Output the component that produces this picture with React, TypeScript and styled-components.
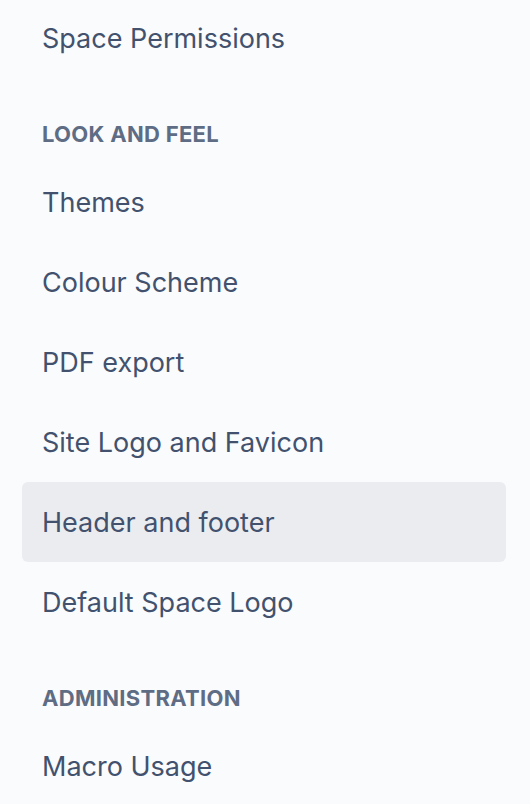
import React from 'react';
import styled, { createGlobalStyle } from 'styled-components';

const GlobalStyle = createGlobalStyle`
  html, body {
    margin: 0;
    padding: 0;
    background: #fafbfc;
  }
  body {
    font-family: Inter, "Noto Sans", sans-serif;
  }
`;

type Section = {
  title?: string;
  items: string[];
};

const sections: Section[] = [
  { items: ['Space Permissions'] },
  {
    title: 'LOOK AND FEEL',
    items: ['Themes', 'Colour Scheme', 'PDF export', 'Site Logo and Favicon', 'Header and footer', 'Default Space Logo'],
  },
  { title: 'ADMINISTRATION', items: ['Macro Usage'] },
];

const App: React.FC = () => {
  const selected = 'Header and footer';
  return (
    <>
      <GlobalStyle />
      <Sidebar>
        {sections.map((section, i) => (
          <Group key={i}>
            {section.title && <Heading>{section.title}</Heading>}
            {section.items.map((item) => (
              <NavItem key={item} $active={item === selected}>
                {item}
              </NavItem>
            ))}
          </Group>
        ))}
      </Sidebar>
    </>
  );
};

export default App;

const Sidebar = styled.nav`
  width: 530px;
  height: 804px;
  overflow: hidden;
  background: #fafbfc;
  padding: 0 24px 0 22px;
  margin-top: -2px;
  box-sizing: border-box;
  display: flex;
  flex-direction: column;
`;

const Group = styled.div`
  display: flex;
  flex-direction: column;
`;

const Heading = styled.div`
  margin: 44px 0 16px;
  padding-left: 20px;
  height: 24px;
  line-height: 24px;
  font-size: 22px;
  font-weight: 700;
  letter-spacing: 0.3px;
  color: #5e6c84;
`;

const NavItem = styled.div<{ $active?: boolean }>`
  height: 80px;
  display: flex;
  align-items: center;
  padding-left: 20px;
  border-radius: 6px;
  font-size: 27px;
  color: #42526e;
  background: ${(p) => (p.$active ? '#ebecf0' : 'transparent')};
  flex-shrink: 0;
`;
